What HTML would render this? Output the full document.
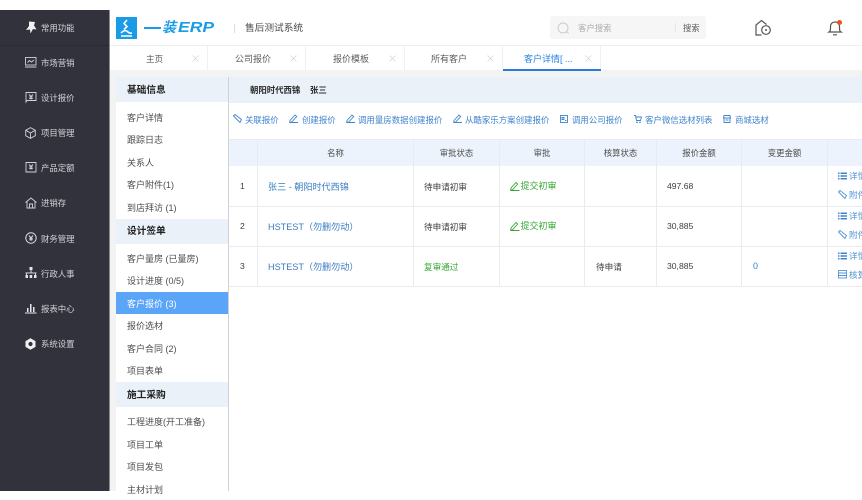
<!DOCTYPE html>
<html lang="zh"><head><meta charset="utf-8"><title>售后测试系统</title>
<style>
html,body{margin:0;padding:0;background:#fff}
body{width:862px;height:500px;position:relative;overflow:hidden;font-family:"Liberation Sans","Noto Sans CJK SC",sans-serif;color:#444}
#w{position:absolute;left:0;top:0;width:862px;height:500px;filter:blur(.3px)}
.b{position:absolute}
.t{position:absolute;white-space:nowrap;line-height:12px;height:12px}
.s{font-size:8.4px;color:#d2d2d6;left:41px;margin-top:1px}
.m{font-size:9px;color:#4c4c4c;left:127px;margin-top:1px}
.h{font-size:9.7px;color:#222;font-weight:700;left:127px;margin-top:1px}
.sec{position:absolute;left:116px;width:112px;height:25px;background:#ebf1f9}
.tab{font-size:9px;color:#5c5c5c;margin-top:1px}
.tb{font-size:8.45px;color:#4084cc;margin-top:1px}
.th{font-size:8.4px;color:#4c4c4c;text-align:center}
.td{font-size:8.6px;color:#3c3c3c}
.lnk{font-size:9.1px;color:#3a7cc2;margin-top:.5px}
.grn{color:#35a535}
.vl{position:absolute;top:140px;width:1px;height:147px;background:#e8ecf2}
.hl{position:absolute;left:229px;width:633px;height:1px;background:#e8ecf2}
svg{position:absolute;overflow:visible}
.act{font-size:8.6px;color:#5195d6}
</style></head><body><div id="w">

<!-- dark sidebar -->
<div class="b" style="left:0;top:10px;width:109px;height:481px;background:#32323c"></div>
<div class="b" style="left:109px;top:10px;width:1px;height:481px;background:#8b8b92"></div>
<div class="b" style="left:0;top:45px;width:109px;height:1px;background:#2b2b34"></div>

<!-- main bg -->
<div class="b" style="left:110px;top:70px;width:752px;height:421px;background:#f3f3f4"></div>
<div class="b" style="left:116px;top:77px;width:112px;height:414px;background:#fff"></div>
<div class="b" style="left:228px;top:77px;width:1px;height:414px;background:#d2d2d6"></div>
<div class="b" style="left:229px;top:77px;width:633px;height:414px;background:#fff"></div>

<!-- sidebar icons & labels -->
<svg style="left:25px;top:21px" width="12" height="13" viewBox="0 0 12 13"><path d="M4 .5l6 .5-1 3.500 2.500 4-3.500-.5-2.500 4.500-.5-4-4 .5 3-4z" fill="#f0f0f2"/></svg>
<div class="t s" style="top:21px">常用功能</div>
<svg style="left:25px;top:57px" width="12" height="11" viewBox="0 0 12 11" fill="none" stroke="#d2d2d6" stroke-width=".9"><rect x=".5" y=".5" width="10.500" height="7.500"/><path d="M0 10h11.500M2.500 5.500l2-2 2 1.500 2.500-2"/></svg>
<div class="t s" style="top:56px">市场营销</div>
<svg style="left:25px;top:92px" width="12" height="11" viewBox="0 0 12 11" fill="none" stroke="#d2d2d6" stroke-width=".9"><path d="M1 .5h10v8h-9l-1 1.500zM4 2.500l2 2 2-2M6 4.500v3M4.300 5h3.400M4.300 6.500h3.400"/></svg>
<div class="t s" style="top:91px">设计报价</div>
<svg style="left:25px;top:127px" width="11" height="12" viewBox="0 0 11 12" fill="none" stroke="#d2d2d6" stroke-width=".9"><path d="M5.500 .6l4.800 2.700v5.400l-4.800 2.700-4.800-2.700v-5.400zM.8 3.300l4.700 2.700 4.700-2.700M5.500 6v5.300"/></svg>
<div class="t s" style="top:126px">项目管理</div>
<svg style="left:25px;top:162px" width="12" height="11" viewBox="0 0 12 11" fill="none" stroke="#d2d2d6" stroke-width=".9"><path d="M1 .5h10v9.500h-10zM4 2.500l2 2 2-2M6 4.500v3M4.300 5h3.400M4.300 6.500h3.400"/></svg>
<div class="t s" style="top:161px">产品定额</div>
<svg style="left:25px;top:197px" width="12" height="12" viewBox="0 0 12 12" fill="none" stroke="#d2d2d6" stroke-width=".9"><path d="M.5 5.500l5.500-4.500 5.500 4.500M2 4.500v6.500h8v-6.500M4.500 11v-4h3v4"/></svg>
<div class="t s" style="top:196px">进销存</div>
<svg style="left:25px;top:232px" width="12" height="12" viewBox="0 0 12 12" fill="none" stroke="#dcdce0" stroke-width="1"><circle cx="6" cy="6" r="5.200"/><path d="M4 3.500l2 2.300 2-2.300M6 5.800v3M4.300 6.300h3.400M4.300 7.700h3.400"/></svg>
<div class="t s" style="top:232px">财务管理</div>
<svg style="left:25px;top:267px" width="12" height="12" viewBox="0 0 12 12" fill="#e4e4e8"><rect x="4.500" y="0" width="3" height="3"/><rect x=".5" y="5.500" width="11" height=".9"/><rect x="5.600" y="3" width=".9" height="3"/><rect x="1" y="6" width=".9" height="2"/><rect x="10" y="6" width=".9" height="2"/><rect x=".5" y="8" width="2.500" height="3"/><rect x="4.700" y="8" width="2.500" height="3"/><rect x="9" y="8" width="2.500" height="3"/></svg>
<div class="t s" style="top:267px">行政人事</div>
<svg style="left:25px;top:303px" width="12" height="11" viewBox="0 0 12 11" fill="#e8e8ec"><rect x="0" y="9.500" width="11.500" height="1"/><rect x="2" y="5" width="1.500" height="4"/><rect x="5" y="1" width="1.500" height="8"/><rect x="8" y="4" width="1.500" height="5"/></svg>
<div class="t s" style="top:302px">报表中心</div>
<svg style="left:25px;top:338px" width="11" height="12" viewBox="0 0 11 12"><path d="M5.500 .3l5 2.850v5.700l-5 2.850-5-2.850v-5.700z" fill="#f0f0f3"/><circle cx="5.500" cy="6" r="2.100" fill="#32323c"/></svg>
<div class="t s" style="top:337px">系统设置</div>

<!-- logo -->
<div class="b" style="left:116px;top:17px;width:21px;height:22px;background:#1a9be8"></div>
<svg style="left:116px;top:17px" width="21" height="22" viewBox="0 0 21 22" fill="none" stroke="#fff" stroke-width="1.600"><path d="M11 3l-3 3.500 3 3-3 3M5 16c3-3 5-3 7-1s3 1 4 1M5 19h11"/></svg>
<div class="b" style="left:144px;top:26.500px;width:17px;height:2.500px;background:#1a9be8"></div>
<div class="t" style="left:162px;top:20px;height:15px;line-height:15px;font-size:14px;font-weight:700;font-style:italic;color:#1a9be8">装</div>
<div class="t" style="left:178px;top:20px;height:15px;line-height:15px;font-size:15px;font-weight:700;font-style:italic;color:#1a9be8;transform:scaleX(1.17);transform-origin:0 50%">ERP</div>

<div class="b" style="left:234px;top:24px;width:1px;height:9px;background:#ddd"></div>
<div class="t" style="left:245px;top:23px;font-size:9.7px;color:#4c4c4c">售后测试系统</div>

<!-- search -->
<div class="b" style="left:550px;top:16px;width:156px;height:23px;background:#f6f6f6;border-radius:3px"></div>
<svg style="left:557px;top:22px" width="13" height="13" viewBox="0 0 13 13" fill="none" stroke="#c9c9c9" stroke-width=".9"><circle cx="6" cy="6" r="5"/><path d="M9.700 9.700l2 2"/></svg>
<div class="t" style="left:578px;top:22px;font-size:8.400px;color:#ababab">客户搜索</div>
<div class="b" style="left:675px;top:23px;width:1px;height:9px;background:#e6e6e6"></div>
<div class="t" style="left:683px;top:22px;font-size:8.400px;color:#5c5c5c">搜索</div>

<!-- header icons -->
<svg style="left:755px;top:20px" width="16" height="16" viewBox="0 0 16 16" fill="none" stroke="#555" stroke-width="1.200"><path d="M6.500 15h-5.500v-10l5.500-4.500 5 4"/><circle cx="11" cy="10" r="4.300" fill="#fff"/><circle cx="11" cy="10" r="1" fill="#555" stroke="none"/></svg>
<svg style="left:828px;top:20px" width="15" height="16" viewBox="0 0 15 16" fill="none" stroke="#555" stroke-width="1.200"><path d="M1 12c1.300-.8 1.500-2 1.500-3.500v-2c0-2.800 2-4.500 4.500-4.500s4.500 1.700 4.500 4.500v2c0 1.500.2 2.700 1.500 3.500zM5 14.800h4"/></svg>
<div class="b" style="left:837px;top:20px;width:5px;height:5px;border-radius:50%;background:#f4501e"></div>

<!-- tabs -->
<div class="b" style="left:110px;top:45px;width:752px;height:1px;background:#efefef"></div>
<div class="b" style="left:207px;top:46px;width:1px;height:24px;background:#f0f0f0"></div>
<div class="b" style="left:305px;top:46px;width:1px;height:24px;background:#f0f0f0"></div>
<div class="b" style="left:404px;top:46px;width:1px;height:24px;background:#f0f0f0"></div>
<div class="b" style="left:502px;top:46px;width:1px;height:24px;background:#f0f0f0"></div>
<div class="b" style="left:600px;top:46px;width:1px;height:24px;background:#f0f0f0"></div>
<div class="b" style="left:503px;top:69px;width:98px;height:1.500px;background:#2a7be0"></div>
<div class="t tab" style="left:146px;top:52px;font-size:8.500px">主页</div>
<div class="t tab" style="left:235px;top:52px">公司报价</div>
<div class="t tab" style="left:333px;top:52px">报价模板</div>
<div class="t tab" style="left:431px;top:52px">所有客户</div>
<div class="t tab" style="left:524px;top:52px;color:#2a82e4">客户详情[ ...</div>
<svg style="left:192px;top:55px" width="7" height="7" viewBox="0 0 7 7" stroke="#d4d4d4" stroke-width=".7"><path d="M.5 .5l6 6M6.500 .5l-6 6"/></svg>
<svg style="left:290px;top:55px" width="7" height="7" viewBox="0 0 7 7" stroke="#d4d4d4" stroke-width=".7"><path d="M.5 .5l6 6M6.500 .5l-6 6"/></svg>
<svg style="left:389px;top:55px" width="7" height="7" viewBox="0 0 7 7" stroke="#d4d4d4" stroke-width=".7"><path d="M.5 .5l6 6M6.500 .5l-6 6"/></svg>
<svg style="left:487px;top:55px" width="7" height="7" viewBox="0 0 7 7" stroke="#d4d4d4" stroke-width=".7"><path d="M.5 .5l6 6M6.500 .5l-6 6"/></svg>
<svg style="left:585px;top:55px" width="7" height="7" viewBox="0 0 7 7" stroke="#d4d4d4" stroke-width=".7"><path d="M.5 .5l6 6M6.500 .5l-6 6"/></svg>

<!-- left submenu -->
<div class="sec" style="top:77px"></div>
<div class="sec" style="top:219px"></div>
<div class="sec" style="top:382px"></div>
<div class="b" style="left:116px;top:292px;width:112px;height:22px;background:#5aa5f8"></div>
<div class="t h" style="top:84px">基础信息</div>
<div class="t m" style="top:111px">客户详情</div>
<div class="t m" style="top:133px">跟踪日志</div>
<div class="t m" style="top:156px">关系人</div>
<div class="t m" style="top:178px">客户附件(1)</div>
<div class="t m" style="top:201px">到店拜访 (1)</div>
<div class="t h" style="top:225px">设计签单</div>
<div class="t m" style="top:252px">客户量房 (已量房)</div>
<div class="t m" style="top:274px">设计进度 (0/5)</div>
<div class="t m" style="top:297px;color:#fff">客户报价 (3)</div>
<div class="t m" style="top:319px">报价选材</div>
<div class="t m" style="top:342px">客户合同 (2)</div>
<div class="t m" style="top:364px">项目表单</div>
<div class="t h" style="top:389px">施工采购</div>
<div class="t m" style="top:415px">工程进度(开工准备)</div>
<div class="t m" style="top:438px">项目工单</div>
<div class="t m" style="top:460px">项目发包</div>
<div class="t m" style="top:483px">主材计划</div>

<!-- customer bar -->
<div class="b" style="left:229px;top:77px;width:633px;height:26px;background:#ebf1f9"></div>
<div class="t" style="left:250px;top:84px;font-size:8.400px;font-weight:700;color:#2c2c2c">朝阳时代西锦</div>
<div class="t" style="left:310px;top:84px;font-size:8.400px;font-weight:700;color:#2c2c2c">张三</div>

<!-- toolbar -->
<svg style="left:233px;top:114px" width="9" height="9" viewBox="0 0 9 9" fill="none" stroke="#4084cc" stroke-width=".9"><path d="M.5 2l1.500-1.500 6.500 5-1.500 3zM2 3.500l3 3"/></svg>
<div class="t tb" style="left:245px;top:113px">关联报价</div>
<svg style="left:289px;top:114px" width="10" height="9" viewBox="0 0 10 9" fill="none" stroke="#4084cc" stroke-width=".9"><path d="M1 6.500l5-5.500 1.700 1.500-5 5.500-2 .5zM.5 8.500h8.500"/></svg>
<div class="t tb" style="left:302px;top:113px">创建报价</div>
<svg style="left:346px;top:114px" width="10" height="9" viewBox="0 0 10 9" fill="none" stroke="#4084cc" stroke-width=".9"><path d="M1 6.500l5-5.500 1.700 1.500-5 5.500-2 .5zM.5 8.500h8.500"/></svg>
<div class="t tb" style="left:358px;top:113px">调用量房数据创建报价</div>
<svg style="left:453px;top:114px" width="10" height="9" viewBox="0 0 10 9" fill="none" stroke="#4084cc" stroke-width=".9"><path d="M1 6.500l5-5.500 1.700 1.500-5 5.500-2 .5zM.5 8.500h8.500"/></svg>
<div class="t tb" style="left:465px;top:113px">从酷家乐方案创建报价</div>
<svg style="left:560px;top:114.500px" width="8" height="8" viewBox="0 0 8 8" fill="none" stroke="#4084cc" stroke-width=".9"><rect x=".5" y=".5" width="7" height="7"/><path d="M2 2.500h2v2h-2zM5 5.500h1.500"/></svg>
<div class="t tb" style="left:572px;top:113px">调用公司报价</div>
<svg style="left:634px;top:114.500px" width="8" height="8" viewBox="0 0 8 8" fill="none" stroke="#4084cc" stroke-width=".9"><path d="M0 .5h1.500l1 5h4l1-3.500h-5.500"/><circle cx="3" cy="7.300" r=".4"/><circle cx="6" cy="7.300" r=".4"/></svg>
<div class="t tb" style="left:645px;top:113px">客户微信选材列表</div>
<svg style="left:723px;top:114.500px" width="8" height="8" viewBox="0 0 8 8" fill="none" stroke="#4084cc" stroke-width=".9"><path d="M1 .5h6l.5 2.500h-7zM1 3v4.500h6v-4.500M2.500 5h3"/></svg>
<div class="t tb" style="left:735px;top:113px">商城选材</div>

<!-- table -->
<div class="b" style="left:229px;top:140px;width:633px;height:26px;background:#edf3fc"></div>
<div class="hl" style="top:139px"></div>
<div class="hl" style="top:206px"></div>
<div class="hl" style="top:246px"></div>
<div class="hl" style="top:286px"></div>
<div class="vl" style="left:257px"></div>
<div class="vl" style="left:413px"></div>
<div class="vl" style="left:499px"></div>
<div class="vl" style="left:584px"></div>
<div class="vl" style="left:656px"></div>
<div class="vl" style="left:741px"></div>
<div class="vl" style="left:827px"></div>

<div class="t th" style="left:258px;width:155px;top:147px">名称</div>
<div class="t th" style="left:414px;width:85px;top:147px">审批状态</div>
<div class="t th" style="left:500px;width:84px;top:147px">审批</div>
<div class="t th" style="left:585px;width:71px;top:147px">核算状态</div>
<div class="t th" style="left:657px;width:84px;top:147px">报价金额</div>
<div class="t th" style="left:742px;width:85px;top:147px">变更金额</div>

<div class="t td" style="left:240px;top:180px">1</div>
<div class="t lnk" style="left:268px;top:180px">张三 - 朝阳时代西锦</div>
<div class="t td" style="left:424px;top:181px">待申请初审</div>
<svg style="left:510px;top:181px" width="10" height="10" viewBox="0 0 10 10" fill="none" stroke="#35a535" stroke-width=".9"><path d="M1 7l5-5.500 1.700 1.500-5 5.500-2 .5zM.5 9.500h9"/></svg>
<div class="t td grn" style="left:520.500px;top:180px;font-size:9px">提交初审</div>
<div class="t td" style="left:667px;top:180px">497.68</div>

<div class="t td" style="left:240px;top:220px">2</div>
<div class="t lnk" style="left:268px;top:220px">HSTEST（勿删勿动）</div>
<div class="t td" style="left:424px;top:221px">待申请初审</div>
<svg style="left:510px;top:221px" width="10" height="10" viewBox="0 0 10 10" fill="none" stroke="#35a535" stroke-width=".9"><path d="M1 7l5-5.500 1.700 1.500-5 5.500-2 .5zM.5 9.500h9"/></svg>
<div class="t td grn" style="left:520.500px;top:220px;font-size:9px">提交初审</div>
<div class="t td" style="left:667px;top:220px">30,885</div>

<div class="t td" style="left:240px;top:260px">3</div>
<div class="t lnk" style="left:268px;top:260px">HSTEST（勿删勿动）</div>
<div class="t td grn" style="left:424px;top:261px">复审通过</div>
<div class="t td" style="left:596px;top:261px">待申请</div>
<div class="t td" style="left:667px;top:260px">30,885</div>
<div class="t td" style="left:753px;top:260px;color:#2f7fd8;font-size:9px">0</div>

<!-- action column -->
<svg style="left:838px;top:172px" width="9" height="8" viewBox="0 0 9 8" fill="#4084cc"><path d="M0 .5h1.500v1.500h-1.500zM2.500 .5h6.500v1.500h-6.500zM0 3.200h1.500v1.500h-1.500zM2.500 3.200h6.500v1.500h-6.500zM0 6h1.500v1.500h-1.500zM2.500 6h6.500v1.500h-6.500z"/></svg>
<div class="t act" style="left:849px;top:170px">详情</div>
<svg style="left:838px;top:190px" width="9" height="9" viewBox="0 0 9 9" fill="none" stroke="#5195d6" stroke-width=".9"><path d="M.5 2l1.500-1.500 6.500 5-1.500 3zM2 3.500l3 3"/></svg>
<div class="t act" style="left:849px;top:189px">附件</div>
<svg style="left:838px;top:212px" width="9" height="8" viewBox="0 0 9 8" fill="#4084cc"><path d="M0 .5h1.500v1.500h-1.500zM2.500 .5h6.500v1.500h-6.500zM0 3.200h1.500v1.500h-1.500zM2.500 3.200h6.500v1.500h-6.500zM0 6h1.500v1.500h-1.500zM2.500 6h6.500v1.500h-6.500z"/></svg>
<div class="t act" style="left:849px;top:210px">详情</div>
<svg style="left:838px;top:230px" width="9" height="9" viewBox="0 0 9 9" fill="none" stroke="#5195d6" stroke-width=".9"><path d="M.5 2l1.500-1.500 6.500 5-1.500 3zM2 3.500l3 3"/></svg>
<div class="t act" style="left:849px;top:229px">附件</div>
<svg style="left:838px;top:252px" width="9" height="8" viewBox="0 0 9 8" fill="#4084cc"><path d="M0 .5h1.500v1.500h-1.500zM2.500 .5h6.500v1.500h-6.500zM0 3.200h1.500v1.500h-1.500zM2.500 3.200h6.500v1.500h-6.500zM0 6h1.500v1.500h-1.500zM2.500 6h6.500v1.500h-6.500z"/></svg>
<div class="t act" style="left:849px;top:250px">详情</div>
<svg style="left:838px;top:270px" width="9" height="9" viewBox="0 0 9 9" fill="none" stroke="#5195d6" stroke-width=".9"><rect x=".5" y=".5" width="8" height="7.500"/><path d="M.5 3h8M.5 5.500h8"/></svg>
<div class="t act" style="left:849px;top:269px">核算</div>

</div></body></html>
